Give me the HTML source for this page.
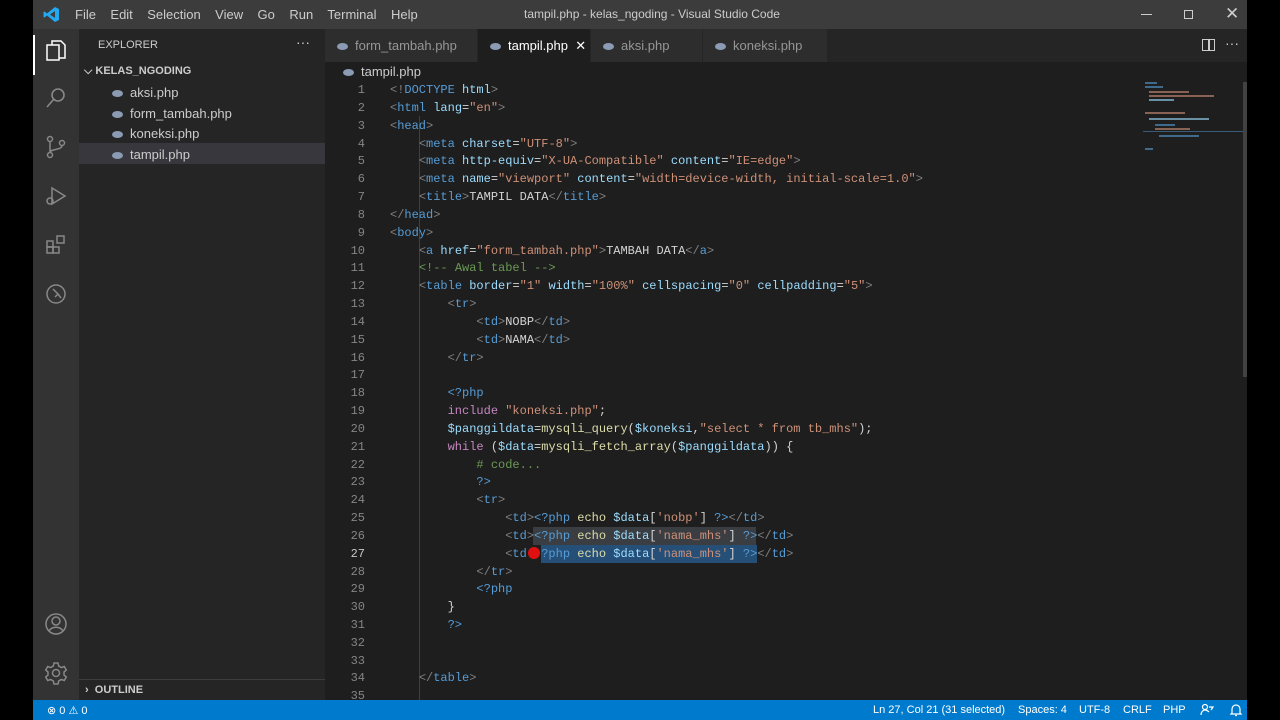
<!DOCTYPE html>
<html><head><style>
*{margin:0;padding:0;box-sizing:border-box}
body{width:1280px;height:720px;background:#000;position:relative;overflow:hidden;font-family:"Liberation Sans",sans-serif;}
.a{position:absolute;white-space:nowrap}
#title{left:33px;top:0;width:1214px;height:29px;background:#3c3c3c;color:#ccc;font-size:13px}
#act{left:33px;top:29px;width:46px;height:671px;background:#333}
#side{left:79px;top:29px;width:246px;height:671px;background:#252526;color:#ccc;font-size:13px}
#tabs{left:325px;top:29px;width:922px;height:33px;background:#252526}
#ed{left:325px;top:62px;width:922px;height:638px;background:#1e1e1e}
#status{left:33px;top:700px;width:1214px;height:20px;background:#007acc;color:#fff;font-size:11px}
#status div{top:4px}
.code{font-family:"Liberation Mono",monospace;font-size:12px;white-space:pre;}
.ln{position:absolute;left:0;width:40px;text-align:right;color:#858585}
.cl{position:absolute;left:65px;color:#d4d4d4}
.g{color:#808080}.t{color:#569cd6}.at{color:#9cdcfe}.s{color:#ce9178}.c{color:#6a9955}.f{color:#dcdcaa}.k{color:#c586c0}.v{color:#9cdcfe}
.tab{position:absolute;top:0;height:33px;line-height:33px;font-size:13px;color:#969696;background:#2d2d2d}
.ic{display:inline-block;width:11px;height:7px;border-radius:50%;background:#8b9bb4;margin-right:7px;vertical-align:middle}
.mm{position:absolute;height:2px;opacity:.6}
</style></head><body>
<div id="title" class="a">
 <svg class="a" style="left:10px;top:6px" width="17" height="17" viewBox="0 0 17 17"><path d="M12 1 L16 3 V14 L12 16 L4 9.5 L1.5 11.5 L0.5 11 V6 L1.5 5.5 L4 7.5 Z M12 5 L7 8.5 L12 12 Z" fill="#23a9f2"/></svg>
 <div class="a" style="left:42px;top:7px">File&nbsp;&nbsp;&nbsp; Edit&nbsp;&nbsp;&nbsp; Selection&nbsp;&nbsp;&nbsp; View&nbsp;&nbsp;&nbsp; Go&nbsp;&nbsp;&nbsp; Run&nbsp;&nbsp;&nbsp; Terminal&nbsp;&nbsp;&nbsp; Help</div>
 <div class="a" style="left:491px;top:7px;font-size:12px">tampil.php - kelas_ngoding - Visual Studio Code</div>
 <div class="a" style="left:1108px;top:14px;width:11px;height:1px;background:#ccc"></div>
 <div class="a" style="left:1151px;top:10px;width:9px;height:9px;border:1px solid #ccc"></div>
 <div class="a" style="left:1192px;top:4px;font-size:17px;color:#ccc">✕</div>
</div>
<div id="act" class="a">
 <div class="a" style="left:0;top:6px;width:2px;height:40px;background:#fff"></div>
 <svg class="a" style="left:11px;top:10px" width="24" height="24" viewBox="0 0 24 24" fill="none" stroke="#fff" stroke-width="1.5"><path d="M8 6V2h9l4 4v13h-6"/><rect x="3" y="6" width="12" height="15"/></svg>
 <svg class="a" style="left:11px;top:57px" width="24" height="24" viewBox="0 0 24 24" fill="none" stroke="#888" stroke-width="1.6"><circle cx="14" cy="9" r="6"/><path d="M10 13 3 21"/></svg>
 <svg class="a" style="left:11px;top:106px" width="24" height="24" viewBox="0 0 24 24" fill="none" stroke="#888" stroke-width="1.5"><circle cx="6" cy="4" r="2.5"/><circle cx="6" cy="20" r="2.5"/><circle cx="18" cy="8" r="2.5"/><path d="M6 6.5v11M18 10.5c0 5-12 3-12 7"/></svg>
 <svg class="a" style="left:11px;top:155px" width="24" height="24" viewBox="0 0 24 24" fill="none" stroke="#888" stroke-width="1.5"><path d="M8 4l13 8-13 8z"/><circle cx="6" cy="17" r="3"/></svg>
 <svg class="a" style="left:11px;top:204px" width="24" height="24" viewBox="0 0 24 24" fill="none" stroke="#888" stroke-width="1.5"><rect x="3" y="8" width="6" height="6"/><rect x="3" y="14" width="6" height="6"/><rect x="9" y="14" width="6" height="6"/><rect x="13" y="3" width="7" height="7"/></svg>
 <svg class="a" style="left:11px;top:253px" width="24" height="24" viewBox="0 0 24 24" fill="none" stroke="#888" stroke-width="1.5"><circle cx="12" cy="12" r="9"/><path d="M9 7l5 5-3 3M14 12l3 4"/></svg>
 <svg class="a" style="left:11px;top:583px" width="24" height="24" viewBox="0 0 24 24" fill="none" stroke="#888" stroke-width="1.5"><circle cx="12" cy="12" r="10"/><circle cx="12" cy="9" r="4"/><path d="M5 19c3-5 11-5 14 0"/></svg>
 <svg class="a" style="left:11px;top:632px" width="24" height="24" viewBox="0 0 24 24" fill="none" stroke="#888" stroke-width="1.5"><circle cx="12" cy="12" r="3.5"/><path d="M10 2h4l.7 3 2.6 1.5 3-1 2 3.5-2.3 2v3l2.3 2-2 3.5-3-1-2.6 1.5-.7 3h-4l-.7-3-2.6-1.5-3 1-2-3.5 2.3-2v-3l-2.3-2 2-3.5 3 1 2.6-1.5z"/></svg>
</div>
<div id="side" class="a">
 <div class="a" style="left:19px;top:10px;font-size:11px">EXPLORER</div>
 <div class="a" style="left:217px;top:5px;font-size:14px">···</div>
 <div class="a" style="left:5px;top:36px;font-size:11px;font-weight:bold">⌵ KELAS_NGODING</div>
 <div class="a" style="left:33px;top:56px"><span class="ic"></span>aksi.php</div>
 <div class="a" style="left:33px;top:77px"><span class="ic"></span>form_tambah.php</div>
 <div class="a" style="left:33px;top:97px"><span class="ic"></span>koneksi.php</div>
 <div class="a" style="left:0;top:114px;width:246px;height:21px;background:#37373d"></div>
 <div class="a" style="left:33px;top:118px"><span class="ic"></span>tampil.php</div>
 <div class="a" style="left:0;top:650px;width:246px;height:1px;background:#3c3c3c"></div>
 <div class="a" style="left:6px;top:655px;font-size:11px;font-weight:bold">›&nbsp; OUTLINE</div>
</div>
<div id="tabs" class="a">
 <div class="tab" style="left:0;width:152px;padding-left:12px"><span class="ic"></span>form_tambah.php</div>
 <div class="tab" style="left:153px;width:112px;padding-left:12px;background:#1e1e1e;color:#fff"><span class="ic"></span>tampil.php &nbsp;✕</div>
 <div class="tab" style="left:266px;width:111px;padding-left:12px"><span class="ic"></span>aksi.php</div>
 <div class="tab" style="left:378px;width:124px;padding-left:12px"><span class="ic"></span>koneksi.php</div>
 <div class="a" style="left:877px;top:10px;width:13px;height:12px;border:1.5px solid #ccc"></div>
 <div class="a" style="left:883px;top:10px;width:1.5px;height:12px;background:#ccc"></div>
 <div class="a" style="left:900px;top:6px;color:#ccc;font-size:14px">···</div>
</div>
<div id="ed" class="a">
 <div class="a" style="left:18px;top:2px;font-size:13px;color:#ccc"><span class="ic"></span>tampil.php</div>
 <div class="a" style="left:918px;top:20px;width:4px;height:295px;background:#424242"></div>
 <div class="mm" style="left:820px;top:20px;width:12px;background:#569cd6"></div>
 <div class="mm" style="left:820px;top:24px;width:18px;background:#569cd6"></div>
 <div class="mm" style="left:824px;top:29px;width:40px;background:#ce9178"></div>
 <div class="mm" style="left:824px;top:33px;width:65px;background:#ce9178"></div>
 <div class="mm" style="left:824px;top:37px;width:25px;background:#9cdcfe"></div>
 <div class="mm" style="left:820px;top:50px;width:40px;background:#ce9178"></div>
 <div class="mm" style="left:824px;top:56px;width:60px;background:#9cdcfe"></div>
 <div class="mm" style="left:830px;top:62px;width:20px;background:#569cd6"></div>
 <div class="mm" style="left:830px;top:66px;width:35px;background:#ce9178"></div>
 <div class="mm" style="left:834px;top:73px;width:40px;background:#569cd6"></div>
 <div class="mm" style="left:820px;top:86px;width:8px;background:#569cd6"></div>
 <div class="a" style="left:818px;top:69px;width:100px;height:1px;background:#3a5a7a"></div>
 <div class="a" style="left:94px;top:54px;width:1px;height:584px;background:#404040"></div>
 <div class="a" style="top:465px;height:18px;background:#3a3d41;left:208px;width:223px"></div>
 <div class="a" style="left:216px;top:483px;width:216px;height:18px;background:#264f78"></div>
 <div class="a" style="left:203px;top:485px;width:12px;height:12px;border-radius:50%;background:#e01010"></div>
 <div class="code">
<div class="ln" style="top:21px">1</div><div class="cl" style="top:21px"><span class="g">&lt;!</span><span class="t">DOCTYPE</span> <span class="at">html</span><span class="g">&gt;</span></div>
<div class="ln" style="top:39px">2</div><div class="cl" style="top:39px"><span class="g">&lt;</span><span class="t">html</span> <span class="at">lang</span>=<span class="s">"en"</span><span class="g">&gt;</span></div>
<div class="ln" style="top:57px">3</div><div class="cl" style="top:57px"><span class="g">&lt;</span><span class="t">head</span><span class="g">&gt;</span></div>
<div class="ln" style="top:75px">4</div><div class="cl" style="top:75px">    <span class="g">&lt;</span><span class="t">meta</span> <span class="at">charset</span>=<span class="s">"UTF-8"</span><span class="g">&gt;</span></div>
<div class="ln" style="top:92px">5</div><div class="cl" style="top:92px">    <span class="g">&lt;</span><span class="t">meta</span> <span class="at">http-equiv</span>=<span class="s">"X-UA-Compatible"</span> <span class="at">content</span>=<span class="s">"IE=edge"</span><span class="g">&gt;</span></div>
<div class="ln" style="top:110px">6</div><div class="cl" style="top:110px">    <span class="g">&lt;</span><span class="t">meta</span> <span class="at">name</span>=<span class="s">"viewport"</span> <span class="at">content</span>=<span class="s">"width=device-width, initial-scale=1.0"</span><span class="g">&gt;</span></div>
<div class="ln" style="top:128px">7</div><div class="cl" style="top:128px">    <span class="g">&lt;</span><span class="t">title</span><span class="g">&gt;</span>TAMPIL DATA<span class="g">&lt;/</span><span class="t">title</span><span class="g">&gt;</span></div>
<div class="ln" style="top:146px">8</div><div class="cl" style="top:146px"><span class="g">&lt;/</span><span class="t">head</span><span class="g">&gt;</span></div>
<div class="ln" style="top:164px">9</div><div class="cl" style="top:164px"><span class="g">&lt;</span><span class="t">body</span><span class="g">&gt;</span></div>
<div class="ln" style="top:182px">10</div><div class="cl" style="top:182px">    <span class="g">&lt;</span><span class="t">a</span> <span class="at">href</span>=<span class="s">"form_tambah.php"</span><span class="g">&gt;</span>TAMBAH DATA<span class="g">&lt;/</span><span class="t">a</span><span class="g">&gt;</span></div>
<div class="ln" style="top:199px">11</div><div class="cl" style="top:199px">    <span class="c">&lt;!-- Awal tabel --&gt;</span></div>
<div class="ln" style="top:217px">12</div><div class="cl" style="top:217px">    <span class="g">&lt;</span><span class="t">table</span> <span class="at">border</span>=<span class="s">"1"</span> <span class="at">width</span>=<span class="s">"100%"</span> <span class="at">cellspacing</span>=<span class="s">"0"</span> <span class="at">cellpadding</span>=<span class="s">"5"</span><span class="g">&gt;</span></div>
<div class="ln" style="top:235px">13</div><div class="cl" style="top:235px">        <span class="g">&lt;</span><span class="t">tr</span><span class="g">&gt;</span></div>
<div class="ln" style="top:253px">14</div><div class="cl" style="top:253px">            <span class="g">&lt;</span><span class="t">td</span><span class="g">&gt;</span>NOBP<span class="g">&lt;/</span><span class="t">td</span><span class="g">&gt;</span></div>
<div class="ln" style="top:271px">15</div><div class="cl" style="top:271px">            <span class="g">&lt;</span><span class="t">td</span><span class="g">&gt;</span>NAMA<span class="g">&lt;/</span><span class="t">td</span><span class="g">&gt;</span></div>
<div class="ln" style="top:289px">16</div><div class="cl" style="top:289px">        <span class="g">&lt;/</span><span class="t">tr</span><span class="g">&gt;</span></div>
<div class="ln" style="top:306px">17</div>
<div class="ln" style="top:324px">18</div><div class="cl" style="top:324px">        <span class="t">&lt;?php</span></div>
<div class="ln" style="top:342px">19</div><div class="cl" style="top:342px">        <span class="k">include</span> <span class="s">"koneksi.php"</span>;</div>
<div class="ln" style="top:360px">20</div><div class="cl" style="top:360px">        <span class="v">$panggildata</span>=<span class="f">mysqli_query</span>(<span class="v">$koneksi</span>,<span class="s">"select * from tb_mhs"</span>);</div>
<div class="ln" style="top:378px">21</div><div class="cl" style="top:378px">        <span class="k">while</span> (<span class="v">$data</span>=<span class="f">mysqli_fetch_array</span>(<span class="v">$panggildata</span>)) {</div>
<div class="ln" style="top:396px">22</div><div class="cl" style="top:396px">            <span class="c"># code...</span></div>
<div class="ln" style="top:413px">23</div><div class="cl" style="top:413px">            <span class="t">?&gt;</span></div>
<div class="ln" style="top:431px">24</div><div class="cl" style="top:431px">            <span class="g">&lt;</span><span class="t">tr</span><span class="g">&gt;</span></div>
<div class="ln" style="top:449px">25</div><div class="cl" style="top:449px">                <span class="g">&lt;</span><span class="t">td</span><span class="g">&gt;</span><span class="t">&lt;?php</span> <span class="f">echo</span> <span class="v">$data</span>[<span class="s">'nobp'</span>] <span class="t">?&gt;</span><span class="g">&lt;/</span><span class="t">td</span><span class="g">&gt;</span></div>
<div class="ln" style="top:467px">26</div><div class="cl" style="top:467px">                <span class="g">&lt;</span><span class="t">td</span><span class="g">&gt;</span><span class="t">&lt;?php</span> <span class="f">echo</span> <span class="v">$data</span>[<span class="s">'nama_mhs'</span>] <span class="t">?&gt;</span><span class="g">&lt;/</span><span class="t">td</span><span class="g">&gt;</span></div>
<div class="ln" style="top:485px;color:#c6c6c6">27</div><div class="cl" style="top:485px">                <span class="g">&lt;</span><span class="t">td</span><span class="g"> </span><span class="t"> ?php</span> <span class="f">echo</span> <span class="v">$data</span>[<span class="s">'nama_mhs'</span>] <span class="t">?&gt;</span><span class="g">&lt;/</span><span class="t">td</span><span class="g">&gt;</span></div>
<div class="ln" style="top:503px">28</div><div class="cl" style="top:503px">            <span class="g">&lt;/</span><span class="t">tr</span><span class="g">&gt;</span></div>
<div class="ln" style="top:520px">29</div><div class="cl" style="top:520px">            <span class="t">&lt;?php</span></div>
<div class="ln" style="top:538px">30</div><div class="cl" style="top:538px">        }</div>
<div class="ln" style="top:556px">31</div><div class="cl" style="top:556px">        <span class="t">?&gt;</span></div>
<div class="ln" style="top:574px">32</div>
<div class="ln" style="top:592px">33</div>
<div class="ln" style="top:609px">34</div><div class="cl" style="top:609px">    <span class="g">&lt;/</span><span class="t">table</span><span class="g">&gt;</span></div>
<div class="ln" style="top:627px">35</div>
 </div>
</div>
<div id="status" class="a">
 <div class="a" style="left:14px">⊗ 0 ⚠ 0</div>
 <div class="a" style="left:840px">Ln 27, Col 21 (31 selected)</div>
 <div class="a" style="left:985px">Spaces: 4</div>
 <div class="a" style="left:1046px">UTF-8</div>
 <div class="a" style="left:1090px">CRLF</div>
 <div class="a" style="left:1130px">PHP</div>
 <svg class="a" style="left:1167px;top:3px" width="14" height="14" viewBox="0 0 14 14" fill="none" stroke="#fff" stroke-width="1.2"><circle cx="5" cy="4" r="2.5"/><path d="M1 12c0-3 2-5 4-5s3 1 4 2M9 4h4l-2 3"/></svg>
 <svg class="a" style="left:1196px;top:3px" width="14" height="14" viewBox="0 0 14 14" fill="none" stroke="#fff" stroke-width="1.2"><path d="M3 10V6a4 4 0 0 1 8 0v4l1 1H2zM6 12.5h2"/></svg>
</div>
</body></html>
